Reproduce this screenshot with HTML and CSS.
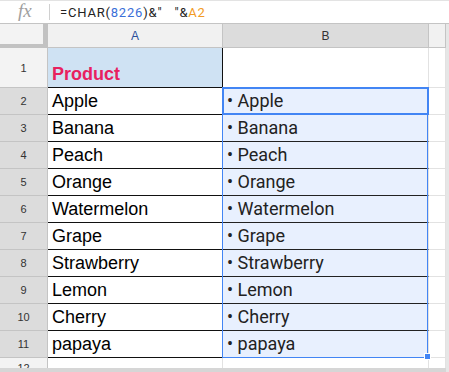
FILE: index.html
```html
<!DOCTYPE html>
<html>
<head>
<meta charset="utf-8">
<link rel="stylesheet" href="styles.css">
</head>
<body>
<div class="app">
  <div class="formula">
    <div class="fx">fx</div>
    <div class="sep"></div>
    <div class="ftext">=CHAR(<span class="num">8226</span>)&amp;"   "&amp;<span class="ref">A2</span></div>
  </div>
  <div class="sheet">
    <div class="grid">
      <div class="corner"></div><div class="ch cha">A</div><div class="ch sel">B</div><div class="ch last"></div>

      <div class="rh tall">1</div><div class="a head">Product</div><div class="b top"></div><div class="c"></div>
      <div class="rh sel">2</div><div class="a">Apple</div><div class="b">• Apple</div><div class="c"></div>
      <div class="rh sel">3</div><div class="a">Banana</div><div class="b">• Banana</div><div class="c"></div>
      <div class="rh sel">4</div><div class="a">Peach</div><div class="b">• Peach</div><div class="c"></div>
      <div class="rh sel">5</div><div class="a">Orange</div><div class="b">• Orange</div><div class="c"></div>
      <div class="rh sel">6</div><div class="a">Watermelon</div><div class="b">• Watermelon</div><div class="c"></div>
      <div class="rh sel">7</div><div class="a">Grape</div><div class="b">• Grape</div><div class="c"></div>
      <div class="rh sel">8</div><div class="a">Strawberry</div><div class="b">• Strawberry</div><div class="c"></div>
      <div class="rh sel">9</div><div class="a">Lemon</div><div class="b">• Lemon</div><div class="c"></div>
      <div class="rh sel">10</div><div class="a">Cherry</div><div class="b">• Cherry</div><div class="c"></div>
      <div class="rh sel">11</div><div class="a">papaya</div><div class="b">• papaya</div><div class="c"></div>
      <div class="rh">12</div><div class="e"></div><div class="e"></div><div class="c"></div>
    </div>
    <div class="range"></div>
    <div class="active"></div>
    <div class="handle"></div>
  </div>
</div>
</body>
</html>
```

FILE: styles.css
```css
html, body {
  margin: 0;
  padding: 0;
  background: #fff;
}
.app {
  width: 449px;
  height: 372px;
  overflow: hidden;
  position: relative;
  background: #fff;
}
.formula {
  border-top: 1px solid #e3e3e3;
  border-bottom: 1px solid #c4c4c4;
  box-sizing: content-box;
  height: 22px;
  display: flex;
  align-items: center;
}
.fx {
  font-family: "Liberation Serif", serif;
  font-style: italic;
  font-size: 19px;
  color: #a0a0a0;
  width: 18px;
  margin-left: 18px;
  line-height: 22px;
  margin-top: -2px;
}
.sep {
  width: 1px;
  height: 16px;
  background: #d0d0d0;
  margin-left: 13px;
}
.ftext {
  font-family: Roboto, "Liberation Sans", sans-serif;
  font-size: 13px;
  letter-spacing: 0.8px;
  color: #222;
  margin-left: 10px;
  white-space: pre;
}
.num { color: #3b6fd8; }
.ref { color: #f29a23; }

.sheet {
  position: relative;
  border-right: 3px solid #e6e6e6;
  width: 446px;
  height: 348px;
  overflow: hidden;
}
.sheet::after {
  content: "";
  position: absolute;
  left: 0;
  right: 0;
  top: 344px;
  height: 4px;
  background: #d6d6d6;
}
.grid {
  display: grid;
  grid-template-columns: 48px 175px 206px 17px;
  grid-template-rows: 24px 40px repeat(10, 27px) 20px;
}
.grid > div {
  box-sizing: border-box;
}
.corner {
  background: #f3f3f3;
  border-right: 5px solid #c2c2c2;
  border-bottom: 4px solid #c2c2c2;
}
.ch {
  background: #f1f1f1;
  border-right: 1px solid #c4c4c4;
  border-bottom: 1px solid #c4c4c4;
  font-family: "Liberation Sans", Arial, sans-serif;
  font-size: 12px;
  color: #222;
  display: flex;
  align-items: center;
  justify-content: center;
}
.ch.cha { color: #2a4f9a; }
.ch.sel { background: #dcdcdc; color: #333; }
.rh {
  background: #f3f3f3;
  border-right: 1px solid #c4c4c4;
  border-bottom: 1px solid #c4c4c4;
  font-family: "Liberation Sans", Arial, sans-serif;
  font-size: 11px;
  color: #333;
  display: flex;
  align-items: center;
  justify-content: center;
}
.rh.sel { background: #dcdcdc; }
.a, .b {
  border-right: 1px solid #111;
  border-bottom: 1px solid #111;
  font-size: 18px;
  line-height: 26px;
  padding-left: 4px;
  white-space: nowrap;
  overflow: hidden;
  display: flex;
  align-items: flex-end;
}
.a {
  font-family: "Liberation Sans", Arial, sans-serif;
  color: #000;
}
.a.head {
  background: #cfe2f3;
  font-weight: bold;
  color: #e8215f;
}
.b {
  font-family: Roboto, "Liberation Sans", sans-serif;
  color: #222;
  background: #e8f0fe;
  border-right: 1px solid #e2e2e2;
  border-bottom: 1px solid #222;
}
.b.top {
  background: #fff;
  border-bottom: 1px solid #111;
  border-right: 1px solid #e2e2e2;
}
.c {
  border-right: 1px solid #e2e2e2;
  border-bottom: 1px solid #e2e2e2;
}
.e {
  border-right: 1px solid #e2e2e2;
  border-bottom: 1px solid #e2e2e2;
}
.range {
  position: absolute;
  left: 222px;
  top: 63px;
  width: 206px;
  height: 271px;
  border: 1px solid #4285f4;
  box-sizing: border-box;
}
.active {
  position: absolute;
  left: 222px;
  top: 63px;
  width: 207px;
  height: 28px;
  border: 2px solid #4285f4;
  box-sizing: border-box;
}
.handle {
  position: absolute;
  left: 424px;
  top: 329px;
  width: 7px;
  height: 7px;
  background: #4285f4;
  box-sizing: border-box;
  border: 1px solid #fff;
}
```
